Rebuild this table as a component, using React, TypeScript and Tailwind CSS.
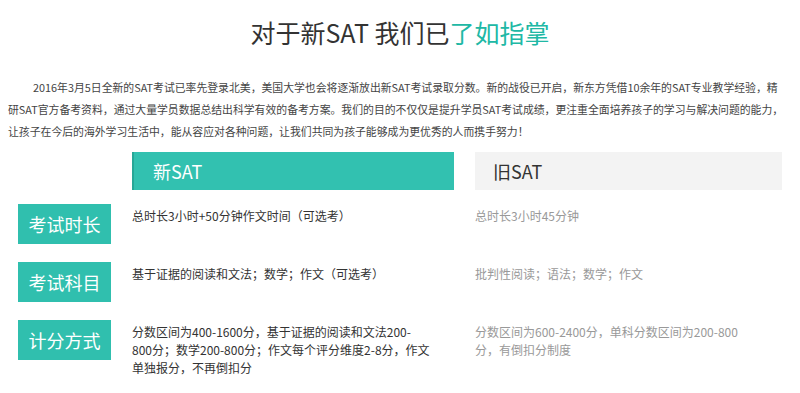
import React from "react";

const font = { fontFamily: '"Noto Sans CJK SC", "Noto Sans", sans-serif' };

function Row({
  label,
  newLines,
  oldLines,
}: {
  label: string;
  newLines: string[];
  oldLines: string[];
}) {
  return (
    <div className="flex items-start">
      <div className="ml-[18px] flex h-[40px] w-[93px] shrink-0 items-center justify-center bg-[#30bfae] text-[18px] text-white">
        {label}
      </div>
      <div className="ml-[21px] w-[322px] shrink-0 pt-[3px] text-[12px] leading-[18px] text-[#333]">
        {newLines.map((l, i) => (
          <div key={i} className="whitespace-nowrap">
            {l}
          </div>
        ))}
      </div>
      <div className="ml-[21px] w-[307px] shrink-0 pt-[3px] text-[12px] leading-[18px] text-[#999]">
        {oldLines.map((l, i) => (
          <div key={i} className="whitespace-nowrap">
            {l}
          </div>
        ))}
      </div>
    </div>
  );
}

export default function App() {
  return (
    <div className="h-[393px] w-[800px] overflow-hidden bg-white" style={font}>
      <div className="flex justify-center pt-[17px]">
        <div className="text-[25px] leading-[30px] text-[#333]">
          对于新SAT 我们已<span className="text-[#20b8a5]">了如指掌</span>
        </div>
      </div>
      <div className="mt-[29px] px-[8px] text-[10.85px] leading-[22px] text-[#444]">
        <div className="whitespace-nowrap pl-[25px]">
          2016年3月5日全新的SAT考试已率先登录北美，美国大学也会将逐渐放出新SAT考试录取分数。新的战役已开启，新东方凭借10余年的SAT专业教学经验，精
        </div>
        <div className="whitespace-nowrap">
          研SAT官方备考资料，通过大量学员数据总结出科学有效的备考方案。我们的目的不仅仅是提升学员SAT考试成绩，更注重全面培养孩子的学习与解决问题的能力，
        </div>
        <div className="whitespace-nowrap">
          让孩子在今后的海外学习生活中，能从容应对各种问题，让我们共同为孩子能够成为更优秀的人而携手努力！
        </div>
      </div>
      <div className="mt-[10px] flex">
        <div className="ml-[132px] flex h-[38px] w-[322px] items-center border-l-[2px] border-[#27a797] bg-[#32c1b0] pl-[19px] text-[18px] text-white">
          新SAT
        </div>
        <div className="ml-[21px] flex h-[38px] w-[307px] items-center bg-[#f3f3f3] pl-[18px] text-[18px] text-[#333]">
          旧SAT
        </div>
      </div>
      <div className="mt-[14px] flex flex-col gap-[18px]">
        <Row
          label="考试时长"
          newLines={["总时长3小时+50分钟作文时间（可选考）"]}
          oldLines={["总时长3小时45分钟"]}
        />
        <Row
          label="考试科目"
          newLines={["基于证据的阅读和文法；数学；作文（可选考）"]}
          oldLines={["批判性阅读；语法；数学；作文"]}
        />
        <Row
          label="计分方式"
          newLines={[
            "分数区间为400-1600分，基于证据的阅读和文法200-",
            "800分；数学200-800分；作文每个评分维度2-8分，作文",
            "单独报分，不再倒扣分",
          ]}
          oldLines={["分数区间为600-2400分，单科分数区间为200-800", "分，有倒扣分制度"]}
        />
      </div>
    </div>
  );
}
